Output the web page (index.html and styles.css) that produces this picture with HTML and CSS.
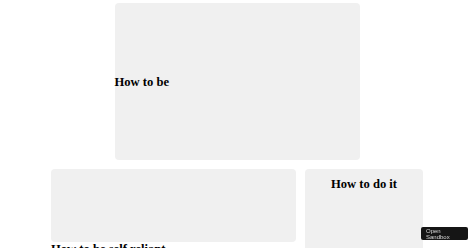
FILE: index.html
```html
<!DOCTYPE html>
<html lang="en">
<head>
<meta charset="utf-8">
<title>How to</title>
<link rel="stylesheet" href="styles.css">
</head>
<body>
<main class="page">
  <section class="row row-top">
    <div class="card card-main">
      <h2 class="title">How to be</h2>
    </div>
  </section>
  <section class="row row-bottom">
    <div class="col-wide">
      <div class="card card-wide"></div>
      <h2 class="title">How to be self reliant</h2>
    </div>
    <div class="card card-narrow">
      <h2 class="title title-center">How to do it</h2>
    </div>
  </section>
</main>
<a class="sandbox-btn" href="#">Open Sandbox</a>
</body>
</html>
```
FILE: styles.css
```css
html, body {
  margin: 0;
  padding: 0;
  background: #ffffff;
  overflow: hidden;
}
.page {
  padding-top: 3px;
  display: flex;
  flex-direction: column;
  align-items: center;
  gap: 9px;
}
.row {
  display: flex;
  justify-content: center;
}
.row-bottom {
  gap: 9px;
  align-items: flex-start;
}
.card {
  background: #f0f0f0;
  border-radius: 4px;
}
.card-main {
  width: 245px;
  height: 157px;
  display: flex;
  align-items: center;
}
.col-wide {
  width: 245px;
  display: flex;
  flex-direction: column;
}
.card-wide {
  height: 73px;
}
.card-narrow {
  width: 118px;
  height: 110px;
  padding-top: 8px;
  box-sizing: border-box;
}
.title {
  margin: 0;
  font-family: "Liberation Serif", "Times New Roman", serif;
  font-weight: bold;
  font-size: 12.6px;
  line-height: 14px;
  color: #000;
  white-space: nowrap;
}
.title-center {
  text-align: center;
}
.sandbox-btn {
  position: fixed;
  right: 6px;
  bottom: 8px;
  width: 47px;
  height: 13px;
  box-sizing: border-box;
  padding: 1px 5px 0 5px;
  background: #151515;
  border-radius: 2px;
  color: #d8d8d8;
  font-family: "Liberation Sans", Arial, sans-serif;
  font-size: 6px;
  line-height: 6px;
  text-decoration: none;
}
```
